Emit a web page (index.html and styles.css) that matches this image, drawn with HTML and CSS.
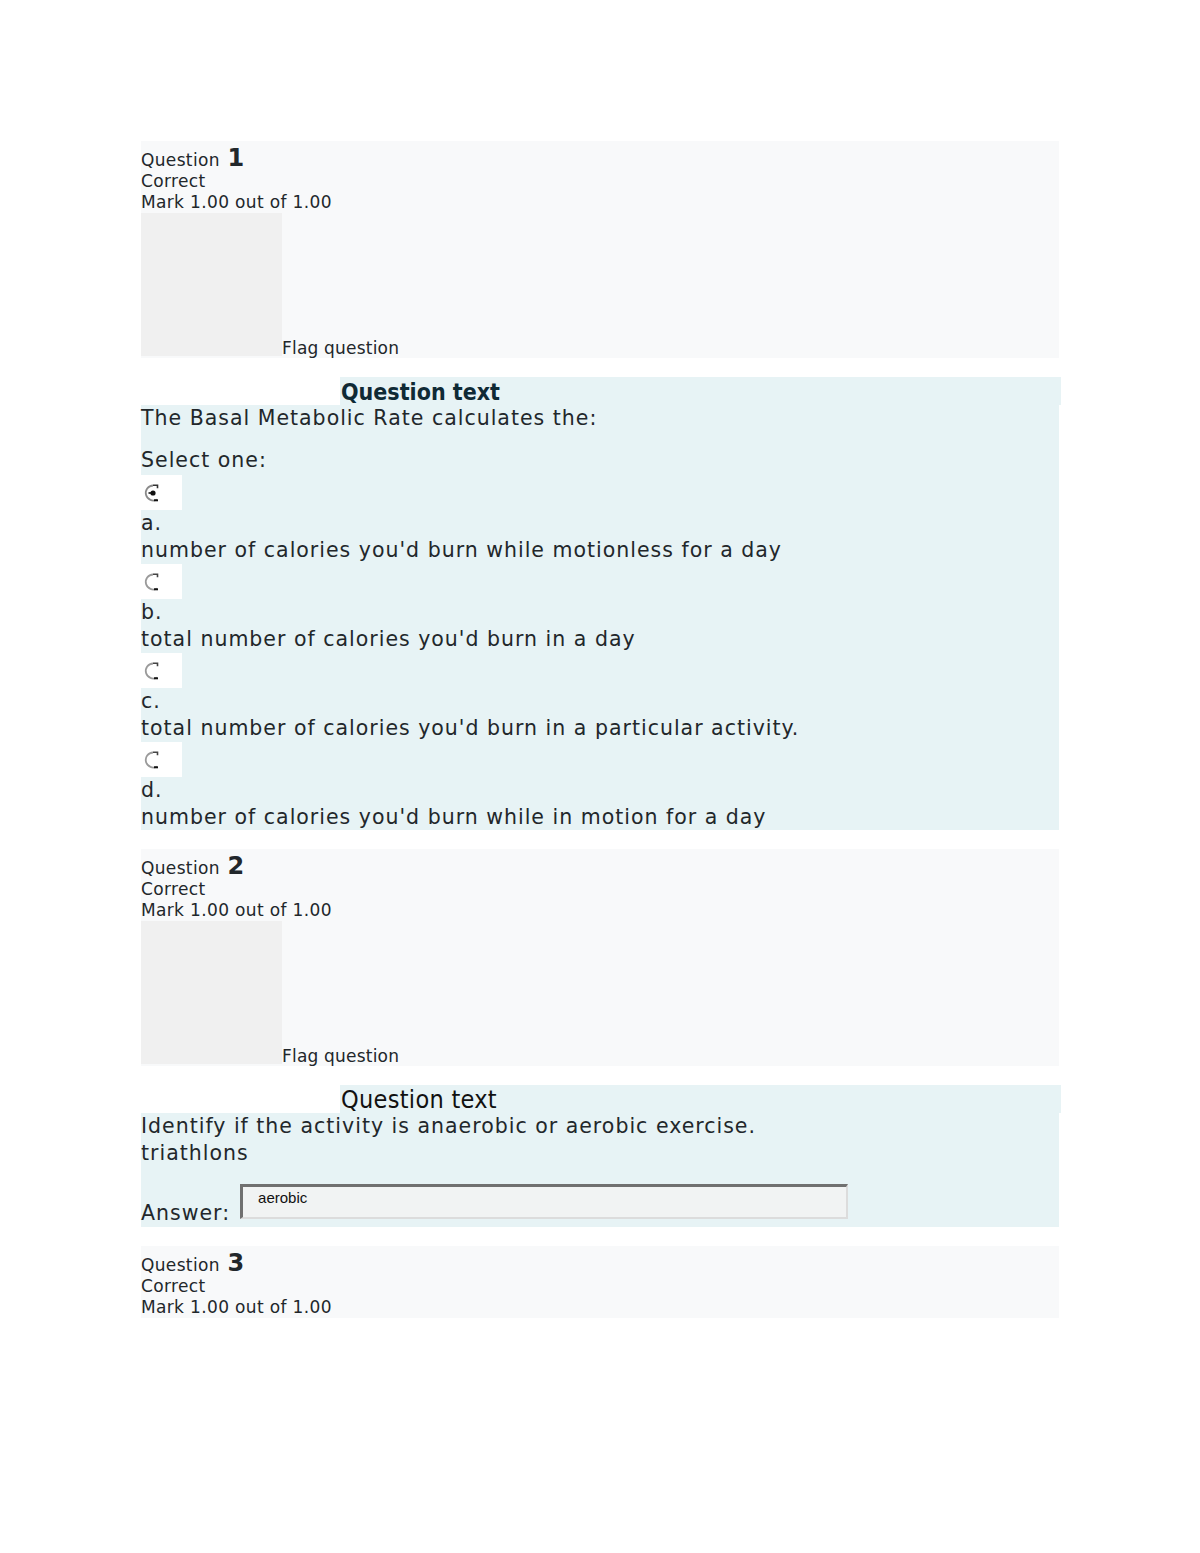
FILE: index.html
```html
<!DOCTYPE html>
<html>
<head>
<meta charset="utf-8">
<link rel="stylesheet" href="styles.css">
</head>
<body>
<div class="page">

  <div class="info">
    <div class="qno">Question <span class="num">1</span></div>
    <div class="line">Correct</div>
    <div class="line">Mark 1.00 out of 1.00</div>
    <div class="flag"><div class="flagbox"></div><span class="flagtext">Flag question</span></div>
  </div>

  <div class="content">
    <div class="headrow"><div class="heading bold">Question text</div></div>
    <div class="body">
      <div class="qtext">The Basal Metabolic Rate calculates the:</div>
      <div class="prompt">Select one:</div>
      <div class="radio"><svg width="22" height="22" viewBox="0 0 22 22"><path d="M11 3.5 A7.5 7.5 0 1 0 15 17.5" fill="none" stroke="#8a8a8a" stroke-width="1.8"/><path d="M11 3.2h4.5v3" fill="none" stroke="#333" stroke-width="1.6"/><path d="M12 18.3h4" stroke="#111" stroke-width="2"/><circle cx="11" cy="11" r="2.6" fill="#111"/><path d="M6.5 11h4" stroke="#111" stroke-width="1.6"/></svg></div>
      <div class="opt">a.</div>
      <div class="opt">number of calories you'd burn while motionless for a day</div>
      <div class="radio"><svg width="22" height="22" viewBox="0 0 22 22"><path d="M11 3.5 A7.5 7.5 0 1 0 15 17.5" fill="none" stroke="#9a9a9a" stroke-width="1.8"/><path d="M11 3.2h4.5v3" fill="none" stroke="#444" stroke-width="1.6"/><path d="M12 18.3h4" stroke="#111" stroke-width="2"/></svg></div>
      <div class="opt">b.</div>
      <div class="opt">total number of calories you'd burn in a day</div>
      <div class="radio"><svg width="22" height="22" viewBox="0 0 22 22"><path d="M11 3.5 A7.5 7.5 0 1 0 15 17.5" fill="none" stroke="#9a9a9a" stroke-width="1.8"/><path d="M11 3.2h4.5v3" fill="none" stroke="#444" stroke-width="1.6"/><path d="M12 18.3h4" stroke="#111" stroke-width="2"/></svg></div>
      <div class="opt">c.</div>
      <div class="opt">total number of calories you'd burn in a particular activity.</div>
      <div class="radio"><svg width="22" height="22" viewBox="0 0 22 22"><path d="M11 3.5 A7.5 7.5 0 1 0 15 17.5" fill="none" stroke="#9a9a9a" stroke-width="1.8"/><path d="M11 3.2h4.5v3" fill="none" stroke="#444" stroke-width="1.6"/><path d="M12 18.3h4" stroke="#111" stroke-width="2"/></svg></div>
      <div class="opt">d.</div>
      <div class="opt">number of calories you'd burn while in motion for a day</div>
    </div>
  </div>

  <div class="info">
    <div class="qno">Question <span class="num">2</span></div>
    <div class="line">Correct</div>
    <div class="line">Mark 1.00 out of 1.00</div>
    <div class="flag"><div class="flagbox"></div><span class="flagtext">Flag question</span></div>
  </div>

  <div class="content">
    <div class="headrow"><div class="heading regular">Question text</div></div>
    <div class="body short-answer">
      <div class="opt">Identify if the activity is anaerobic or aerobic exercise.</div>
      <div class="opt">triathlons</div>
      <div class="answer"><span class="anslabel">Answer:</span><div class="input">aerobic</div></div>
    </div>
  </div>

  <div class="info short">
    <div class="qno">Question <span class="num">3</span></div>
    <div class="line">Correct</div>
    <div class="line">Mark 1.00 out of 1.00</div>
  </div>

</div>
</body>
</html>
```

FILE: styles.css
```css
html, body {
  margin: 0;
  padding: 0;
  background: #ffffff;
}
.page {
  padding: 141px 0 0 141px;
  width: 918px;
  font-family: "DejaVu Sans", sans-serif;
  color: #22272b;
}
.info {
  background: #f8f9fa;
  height: 217px;
  margin-bottom: 19px;
  font-size: 17px;
  letter-spacing: 0.35px;
}
.info.short {
  height: 72px;
}
.qno {
  height: 30px;
  line-height: 34px;
}
.num {
  font-weight: bold;
  font-size: 24px;
  margin-left: 2px;
}
.line {
  height: 21px;
  line-height: 21px;
}
.flag {
  display: flex;
  align-items: flex-end;
  height: 146px;
}
.flagbox {
  width: 141px;
  height: 143px;
  background: #f0f0f0;
  align-self: flex-start;
}
.flagtext {
  line-height: 18px;
  margin-bottom: 2px;
  letter-spacing: 0.2px;
}
.content {
  margin-bottom: 19px;
}
.headrow {
  display: flex;
  height: 28px;
  width: 920px;
}
.heading {
  margin-left: 199px;
  flex: 1;
  background: #e7f3f5;
  font-family: "DejaVu Sans Condensed", "DejaVu Sans", sans-serif;
  font-stretch: condensed;
  line-height: 30px;
  color: #0f2a35;
  padding-left: 1px;
  white-space: nowrap;
}
.heading.bold {
  font-size: 23px;
  font-weight: bold;
}
.heading.regular {
  font-size: 25px;
  font-weight: normal;
  letter-spacing: 0.3px;
  color: #111;
}
.body {
  background: #e7f3f5;
  font-size: 20.5px;
  line-height: 26.5px;
  letter-spacing: 1px;
}
.body.short-answer {
  padding-bottom: 2px;
}
.qtext {
  height: 27px;
}
.prompt {
  margin-top: 15px;
  height: 27px;
}
.radio {
  width: 41px;
  height: 35px;
  background: #ffffff;
  margin-top: 1px;
  display: flex;
  align-items: center;
}
.radio svg {
  margin-left: 1px;
}
.opt {
  height: 26.5px;
}
.answer {
  display: flex;
  align-items: flex-end;
  margin-top: 18px;
}
.anslabel {
  line-height: 23px;
}
.input {
  margin-left: 10px;
  margin-bottom: 6px;
  width: 588px;
  height: 30px;
  padding-left: 15px;
  background: #f1f3f3;
  border-style: solid;
  border-width: 3px 2px 2px 3px;
  border-color: #707070 #dcdcdc #dcdcdc #707070;
  font-family: "Liberation Sans", sans-serif;
  font-size: 15px;
  letter-spacing: 0;
  line-height: 22px;
  color: #111;
}
```
